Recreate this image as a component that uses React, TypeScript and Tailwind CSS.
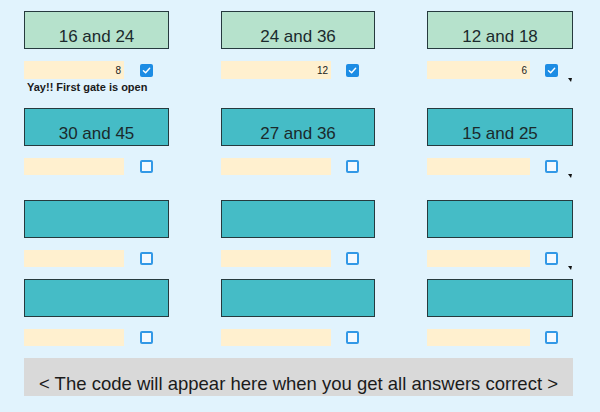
import React from 'react';

type Cell = {
    label: string;
    value?: string;
    checked?: boolean;
};

type RowProps = {
    cells: Cell[];
    solved: boolean;
    lineH: string;
    message?: string;
    marker?: boolean;
    gapAfter: string;
};

// widths of the answer fields, one per column
const inputWidths = ['w-[100px]', 'w-[110px]', 'w-[103px]'];
const boxWidths = ['w-[145px]', 'w-[154px]', 'w-[146px]'];

const CheckBox: React.FC<{ checked?: boolean }> = ({ checked }) =>
    checked ? (
        <span className="flex h-[13px] w-[13px] shrink-0 items-center justify-center rounded-[2px] bg-[#1c8ce4]">
            <svg width="9" height="9" viewBox="0 0 10 10" fill="none">
                <path d="M1.6 5.2 L4 7.4 L8.5 2.6" stroke="#fff" strokeWidth="1.6" strokeLinecap="round" strokeLinejoin="round" />
            </svg>
        </span>
    ) : (
        <span className="block h-[13px] w-[13px] shrink-0 rounded-[2px] border-2 border-[#3298e6] bg-[#f3f9ff]" />
    );

const GateRow: React.FC<RowProps> = ({ cells, solved, lineH, message, marker, gapAfter }) => (
    <div className={`flex w-[549px] justify-between ${gapAfter}`}>
        {cells.map((c, i) => (
            <div key={i} className={`flex flex-col ${boxWidths[i]}`}>
                <div
                    className={`h-[38px] border border-[#263a3e] pt-[15px] text-center text-[17px] leading-[20px] text-[#1b2a2c] ${solved ? 'bg-[#b6e2cc]' : 'bg-[#45bcc6]'}`}
                >
                    {c.label}
                </div>
                <div className={`relative mt-[12px] flex items-center ${lineH}`}>
                    <div className={`flex h-full items-center justify-end bg-[#fff0cf] pr-[3px] text-[10px] text-[#222] ${inputWidths[i]}`}>
                        {c.value}
                    </div>
                    <div className={i === 0 ? 'ml-[16px]' : 'ml-[15px]'}>
                        <CheckBox checked={c.checked} />
                    </div>
                    {marker && i === 2 && (
                        <svg className="absolute bottom-[-3px] right-[1px]" width="4" height="4" viewBox="0 0 4 4">
                            <polygon points="0,0 4,0 3,4" fill="#111" />
                        </svg>
                    )}
                </div>
                {message !== undefined && (
                    <div className="mt-[2px] h-[13px] pl-[3px] text-[11px] font-bold leading-[13px] whitespace-nowrap text-[#1a1a1a]">
                        {i === 0 ? message : ''}
                    </div>
                )}
            </div>
        ))}
    </div>
);

export default function App() {
    return (
        <div className="min-h-[412px] w-[600px] bg-[#e1f3fd] pl-[24px] pt-[11px] font-['Liberation_Sans',Arial,sans-serif]">
            <GateRow
                cells={[
                    { label: '16 and 24', value: '8', checked: true },
                    { label: '24 and 36', value: '12', checked: true },
                    { label: '12 and 18', value: '6', checked: true },
                ]}
                solved
                lineH="h-[18px]"
                message="Yay!! First gate is open"
                marker
                gapAfter="mb-[14px]"
            />
            <GateRow
                cells={[{ label: '30 and 45' }, { label: '27 and 36' }, { label: '15 and 25' }]}
                solved={false}
                lineH="h-[17px]"
                marker
                gapAfter="mb-[25px]"
            />
            <GateRow
                cells={[{ label: '' }, { label: '' }, { label: '' }]}
                solved={false}
                lineH="h-[17px]"
                marker
                gapAfter="mb-[12px]"
            />
            <GateRow
                cells={[{ label: '' }, { label: '' }, { label: '' }]}
                solved={false}
                lineH="h-[17px]"
                gapAfter="mb-[12px]"
            />
            <div className="h-[38px] w-[549px] bg-[#d9d9d9] pt-[15px] text-center text-[18.5px] leading-[22px] text-[#1b1b1b]">
                &lt; The code will appear here when you get all answers correct &gt;
            </div>
        </div>
    );
}
